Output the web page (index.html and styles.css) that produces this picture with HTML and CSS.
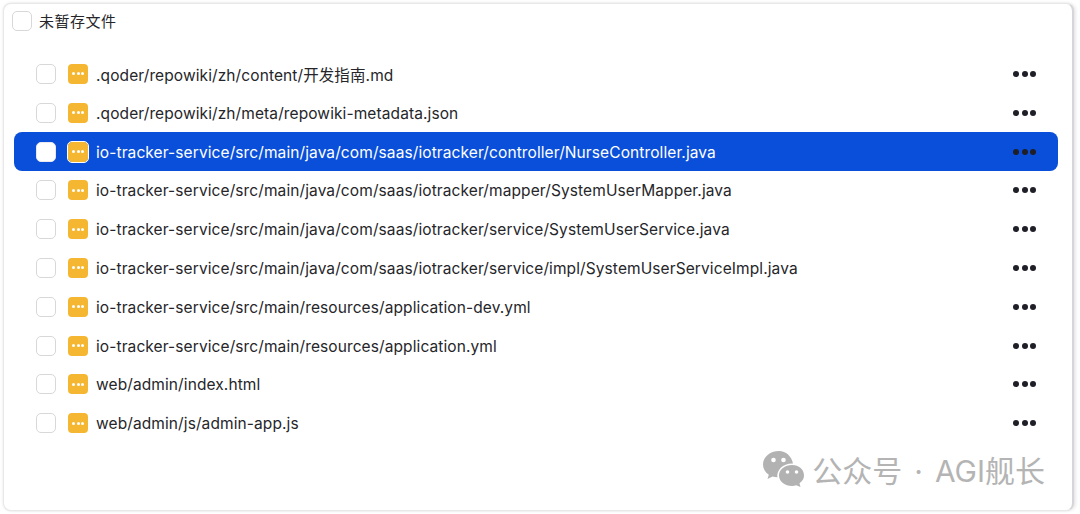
FILE: index.html
```html
<!DOCTYPE html>
<html lang="zh">
<head>
  <meta charset="UTF-8">
  <title>未暂存文件</title>
  <link rel="stylesheet" href="styles.css">
</head>
<body>
  <div class="panel">
    <div class="header">
      <span class="check"></span>
      <span class="header-title">未暂存文件</span>
    </div>

    <div class="file-list">
      <div class="file-row">
        <span class="check"></span>
        <span class="badge"><i></i><i></i><i></i></span>
        <span class="file-name">.qoder/repowiki/zh/content/开发指南.md</span>
        <span class="more"><i></i><i></i><i></i></span>
      </div>
      <div class="file-row">
        <span class="check"></span>
        <span class="badge"><i></i><i></i><i></i></span>
        <span class="file-name">.qoder/repowiki/zh/meta/repowiki-metadata.json</span>
        <span class="more"><i></i><i></i><i></i></span>
      </div>
      <div class="file-row selected">
        <span class="check"></span>
        <span class="badge"><i></i><i></i><i></i></span>
        <span class="file-name">io-tracker-service/src/main/java/com/saas/iotracker/controller/NurseController.java</span>
        <span class="more"><i></i><i></i><i></i></span>
      </div>
      <div class="file-row">
        <span class="check"></span>
        <span class="badge"><i></i><i></i><i></i></span>
        <span class="file-name">io-tracker-service/src/main/java/com/saas/iotracker/mapper/SystemUserMapper.java</span>
        <span class="more"><i></i><i></i><i></i></span>
      </div>
      <div class="file-row">
        <span class="check"></span>
        <span class="badge"><i></i><i></i><i></i></span>
        <span class="file-name">io-tracker-service/src/main/java/com/saas/iotracker/service/SystemUserService.java</span>
        <span class="more"><i></i><i></i><i></i></span>
      </div>
      <div class="file-row">
        <span class="check"></span>
        <span class="badge"><i></i><i></i><i></i></span>
        <span class="file-name">io-tracker-service/src/main/java/com/saas/iotracker/service/impl/SystemUserServiceImpl.java</span>
        <span class="more"><i></i><i></i><i></i></span>
      </div>
      <div class="file-row">
        <span class="check"></span>
        <span class="badge"><i></i><i></i><i></i></span>
        <span class="file-name">io-tracker-service/src/main/resources/application-dev.yml</span>
        <span class="more"><i></i><i></i><i></i></span>
      </div>
      <div class="file-row">
        <span class="check"></span>
        <span class="badge"><i></i><i></i><i></i></span>
        <span class="file-name">io-tracker-service/src/main/resources/application.yml</span>
        <span class="more"><i></i><i></i><i></i></span>
      </div>
      <div class="file-row">
        <span class="check"></span>
        <span class="badge"><i></i><i></i><i></i></span>
        <span class="file-name">web/admin/index.html</span>
        <span class="more"><i></i><i></i><i></i></span>
      </div>
      <div class="file-row">
        <span class="check"></span>
        <span class="badge"><i></i><i></i><i></i></span>
        <span class="file-name">web/admin/js/admin-app.js</span>
        <span class="more"><i></i><i></i><i></i></span>
      </div>
    </div>

    <div class="watermark">
      <svg class="wechat" width="42" height="36" viewBox="0 0 42 36">
        <path fill="#b2b2b2" d="M16 0C7 0 0 6 0 13.5c0 4.200 2.200 7.800 5.800 10.300L4.500 28l5-2.600c1.600.5 3.200.8 4.900.9C13.300 19 20 12 30 12.400 28.600 5.400 23 0 16 0z"/>
        <path fill="#b2b2b2" d="M29 14c-7 0-13 4.500-13 10.500S22 35 29 35c1.500 0 3-.3 4.300-.7l4.200 1.700-1-3.800c3-2 4.500-4.600 4.500-7.700C41 18.500 36 14 29 14z"/>
        <circle cx="10.500" cy="9" r="2.300" fill="#fff"/>
        <circle cx="20.500" cy="9" r="2.300" fill="#fff"/>
        <circle cx="24.500" cy="21" r="1.800" fill="#fff"/>
        <circle cx="33.500" cy="21" r="1.800" fill="#fff"/>
      </svg>
      <span class="watermark-text">公众号 · AGI舰长</span>
    </div>
  </div>
</body>
</html>
```

FILE: styles.css
```css
* {
  box-sizing: border-box;
}

body {
  margin: 0;
  height: 514px;
  padding: 3px 6px 3px 3px;
  background-color: #fff;
  font-family: Inter, "Noto Sans CJK SC", sans-serif;
  color: #26262a;
  overflow: hidden;
}

.panel {
  position: relative;
  height: 508px;
  padding: 0 14px 0 8px;
  background-color: #fff;
  border-radius: 8px;
  border: 1px solid #e8e8e8;
  border-right: 2px solid #d6d6da;
  box-shadow: 0 0 3px rgba(0, 0, 0, 0.1), 3px 0 3px rgba(0, 0, 0, 0.05);
}

.header {
  display: flex;
  align-items: center;
  gap: 7px;
  height: 33px;
}

.header-title {
  font-size: 15px;
  letter-spacing: 0.5px;
}

.check {
  flex: none;
  width: 20px;
  height: 20px;
  background-color: #fff;
  border: 1.5px solid #d8d8d8;
  border-radius: 5px;
}

.file-list {
  margin: 17.6px 0 0 2px;
}

.file-row {
  display: flex;
  align-items: center;
  height: 38.8px;
  padding: 0 22px;
  border-radius: 8px;
}

.file-row .check {
  margin-right: 12px;
}

.badge {
  flex: none;
  display: flex;
  align-items: center;
  justify-content: center;
  gap: 1.5px;
  width: 20px;
  height: 20px;
  margin-right: 8px;
  background-color: #f5b731;
  border-radius: 4px;
}

.badge i {
  width: 3px;
  height: 3px;
  background-color: #fff;
  border-radius: 50%;
}

.file-name {
  flex: 1;
  padding-top: 1px;
  font-size: 15.5px;
  letter-spacing: 0.1px;
  white-space: nowrap;
}

.more {
  display: flex;
  gap: 2.5px;
}

.more i {
  width: 6px;
  height: 6px;
  background-color: #1f1f28;
  border-radius: 50%;
}

.selected {
  background-color: #0a4fd9;
}

.selected .file-name {
  color: #fff;
}

.selected .check {
  border-color: #e8e8ee;
}

.selected .badge {
  outline: 1.5px solid #fff;
}

.watermark {
  position: absolute;
  right: 27px;
  bottom: 19px;
  display: flex;
  align-items: center;
  gap: 7px;
  color: #b4b4b4;
}

.watermark-text {
  font-size: 30px;
  word-spacing: 3.5px;
}
```
